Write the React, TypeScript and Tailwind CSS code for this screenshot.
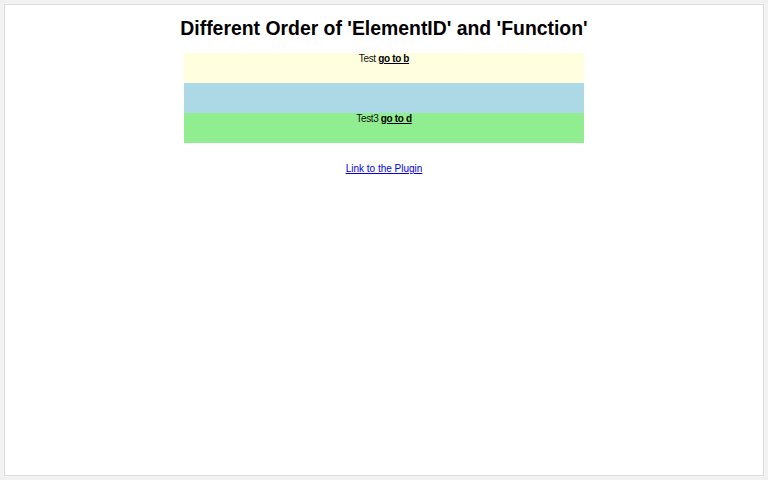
export default function App() {
  return (
    <div className="h-[480px] w-[768px] bg-[#f2f2f2] p-[4px] font-['Liberation_Sans',Arial,sans-serif]">
      <div className="h-[472px] border border-[#dcdcdc] bg-white">
        <h1 className="mt-[11px] text-center text-[19.4px] font-bold leading-[24px] text-black">
          Different Order of 'ElementID' and 'Function'
        </h1>
        <div className="mx-auto mt-[13px] w-[400px] text-center text-[10px] leading-[11px] tracking-[-0.35px] text-[#111]">
          <div className="h-[30px] bg-[#ffffe0]">
            Test{' '}
            <a className="font-bold text-black underline" href="#b">
              go to b
            </a>
          </div>
          <div className="h-[30px] bg-[#add8e6]" />
          <div className="h-[30px] bg-[#90ee90]">
            Test3{' '}
            <a className="font-bold text-black underline" href="#d">
              go to d
            </a>
          </div>
        </div>
        <div className="mt-[20px] text-center text-[10px] leading-[12px]">
          <a className="text-[#0000ee] underline" href="#plugin">
            Link to the Plugin
          </a>
        </div>
      </div>
    </div>
  );
}
